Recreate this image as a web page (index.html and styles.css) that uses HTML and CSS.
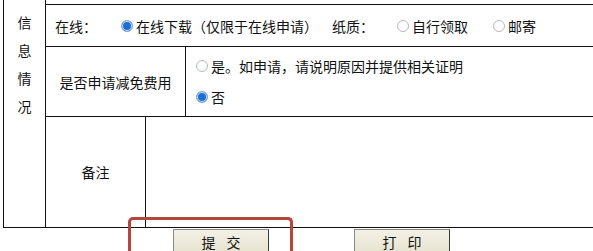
FILE: index.html
```html
<!DOCTYPE html>
<html lang="zh-CN">
<head>
    <meta charset="UTF-8">
    <meta name="viewport" content="width=device-width, initial-scale=1.0">
    <title>信息情况</title>
    <link rel="stylesheet" href="styles.css">
</head>
<body>
    <div class="form">
        <div class="side">
            <span>信</span>
            <span>息</span>
            <span>情</span>
            <span>况</span>
        </div>
        <div class="main">
            <div class="row prev"></div>

            <div class="row online">
                <span class="field">在线：</span>
                <label class="opt opt-online"><input type="radio" name="get" checked>在线下载（仅限于在线申请）</label>
                <span class="field paper">纸质：</span>
                <label class="opt opt-self"><input type="radio" name="get">自行领取</label>
                <label class="opt opt-mail"><input type="radio" name="get">邮寄</label>
            </div>

            <div class="row fee">
                <div class="cell label fee-label">是否申请减免费用</div>
                <div class="cell fee-opts">
                    <label class="opt"><input type="radio" name="fee">是。如申请，请说明原因并提供相关证明</label>
                    <label class="opt"><input type="radio" name="fee" checked>否</label>
                </div>
            </div>

            <div class="row note">
                <div class="cell label note-label">备注</div>
                <div class="cell note-body"></div>
            </div>
        </div>
    </div>

    <div class="actions">
        <button class="btn" type="button">提 交</button>
        <button class="btn" type="button">打 印</button>
    </div>

    <div class="mark"></div>
</body>
</html>
```

FILE: styles.css
```css
* {
    box-sizing: border-box;
}

body {
    margin: 0;
    width: 593px;
    height: 251px;
    overflow: hidden;
    position: relative;
    background: #fff;
    color: #111;
    font-family: "Noto Sans CJK SC", "Microsoft YaHei", sans-serif;
    font-size: 14px;
}

.form {
    display: flex;
    width: 590px;
    margin-left: 3px;
    border-left: 1px solid #111;
    border-bottom: 1px solid #111;
}

.side {
    width: 42px;
    flex: none;
    border-right: 1px solid #111;
    display: flex;
    flex-direction: column;
    align-items: center;
    padding-top: 8px;
    line-height: 28px;
}

.main {
    flex: 1;
}

.row {
    display: flex;
    border-bottom: 1px solid #111;
}

.row:last-child {
    border-bottom: none;
}

.prev {
    height: 5px;
}

.online {
    height: 42px;
    align-items: center;
    padding-left: 9px;
}

.opt {
    display: flex;
    align-items: center;
    line-height: 20px;
}

.opt input {
    appearance: none;
    width: 12px;
    height: 12px;
    margin: 0 3px 0 0;
    border: 1px solid #b4b8bc;
    border-radius: 50%;
    background: #fff;
}

.opt input:checked {
    border-color: #8fa9c9;
    background: #1d6fd8;
    box-shadow: inset 0 0 0 1px #d6e4f5;
}

.opt-online {
    margin-left: 24px;
}

.paper {
    margin-left: 14px;
}

.opt-self {
    margin-left: 23px;
}

.opt-mail {
    margin-left: 25px;
}

.fee {
    height: 70px;
}

.cell {
    display: flex;
}

.label {
    align-items: center;
    justify-content: center;
    border-right: 1px solid #111;
}

.fee-label {
    width: 140px;
}

.fee-opts {
    flex-direction: column;
    padding: 9px 0 0 10px;
    gap: 11px;
}

.note {
    height: 110px;
}

.note-label {
    width: 100px;
}

.actions {
    display: flex;
    gap: 85px;
    margin: 1px 0 0 173px;
}

.btn {
    width: 96px;
    height: 22px;
    padding: 2px 0 0;
    font-family: inherit;
    font-size: 14px;
    line-height: 20px;
    word-spacing: 8px;
    color: #111;
    background: linear-gradient(#f3f1e6, #e8e4d2);
    border: 1px solid #8a8a86;
    border-right-color: #3c3c3a;
    border-bottom: none;
}

.mark {
    position: absolute;
    left: 128px;
    top: 217px;
    bottom: 0;
    width: 165px;
    border: 3px solid #b5463d;
    border-bottom: none;
    border-radius: 5px 5px 0 0;
}
```
